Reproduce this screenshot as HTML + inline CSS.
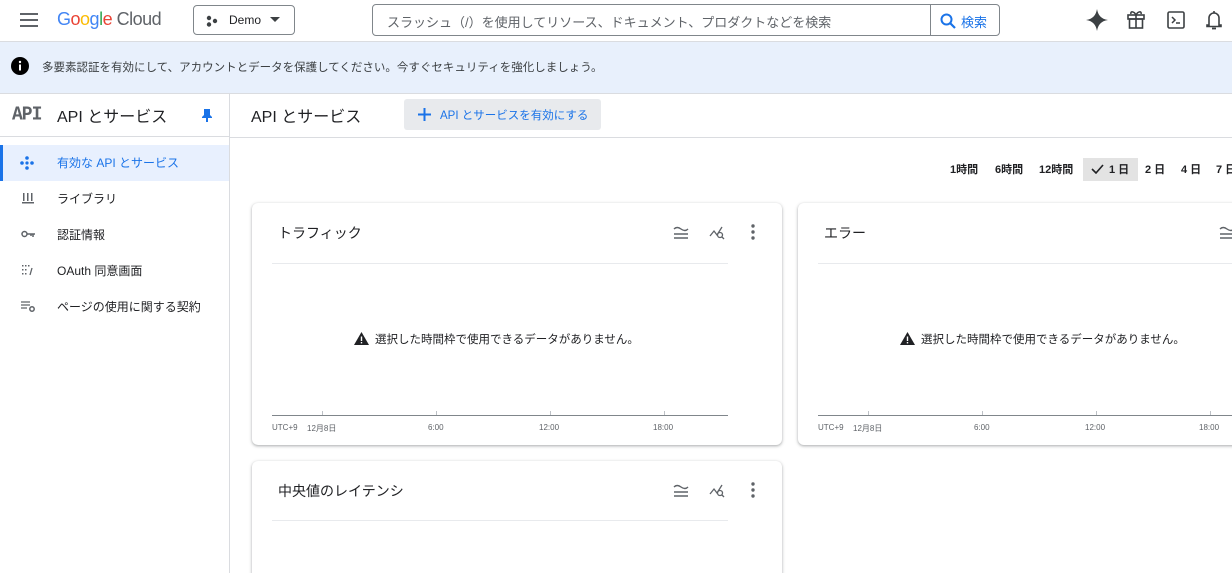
<!DOCTYPE html>
<html><head><meta charset="utf-8">
<style>
*{box-sizing:border-box;margin:0;padding:0}
html,body{width:1232px;height:573px;overflow:hidden}
body{background:#fff;font-family:"Liberation Sans","Noto Sans CJK JP",sans-serif;color:#202124;position:relative}
.a{position:absolute;white-space:nowrap}
.hdr{left:0;top:0;width:1232px;height:42px;border-bottom:1px solid #dadce0}
.banner{left:0;top:42px;width:1232px;height:52px;background:#e8f0fc;border-bottom:1px solid #dadce0;font-size:11.5px;color:#3c4043}
.side{left:0;top:94px;width:230px;height:479px;border-right:1px solid #dadce0}
.item{position:absolute;left:0;width:229px;height:36px;font-size:12px;line-height:36px;padding-left:57px;color:#202124;white-space:nowrap}
.card{position:absolute;background:#fff;border-radius:6px;box-shadow:0 1px 2px rgba(60,64,67,.3),0 1px 3px 1px rgba(60,64,67,.12)}
.ct{position:absolute;left:26px;top:20px;font-size:14px}
.div{position:absolute;left:20px;top:60px;width:456px;border-top:1px solid #e8eaed}
.msg{position:absolute;left:102px;top:128px;font-size:11.5px;white-space:nowrap}
.axis{position:absolute;left:20px;top:212px;width:456px;border-top:1px solid #80868b}
.lab{position:absolute;top:220px;font-size:8px;color:#5f6368;white-space:nowrap}
.tick{position:absolute;top:208px;width:1px;height:4px;background:#bdc1c6}
.tr span{position:absolute;font-size:11px;font-weight:bold;color:#202124;white-space:nowrap}
</style></head><body>
<div class="a hdr">
  <svg class="a" style="left:20px;top:13px" width="18" height="14"><rect y="0" width="18" height="2" fill="#5f6368"/><rect y="6" width="18" height="2" fill="#5f6368"/><rect y="12" width="18" height="2" fill="#5f6368"/></svg>
  <div class="a" style="left:57px;top:9px;font-size:18px;letter-spacing:-0.5px"><span style="color:#4285f4">G</span><span style="color:#ea4335">o</span><span style="color:#fbbc04">o</span><span style="color:#4285f4">g</span><span style="color:#34a853">l</span><span style="color:#ea4335">e</span> <span style="color:#5f6368">Cloud</span></div>
  <div class="a" style="left:193px;top:5px;width:102px;height:30px;border:1px solid #80868b;border-radius:4px">
    <svg class="a" style="left:12px;top:9px" width="12" height="12"><circle cx="3" cy="3" r="2.2" fill="#3c4043"/><circle cx="9" cy="6" r="2.2" fill="#3c4043"/><circle cx="3" cy="9.5" r="2.2" fill="#3c4043"/></svg>
    <span class="a" style="left:35px;top:7px;font-size:12px">Demo</span>
    <svg class="a" style="left:76px;top:11px" width="10" height="6"><path d="M0 0H10L5 5Z" fill="#3c4043"/></svg>
  </div>
  <div class="a" style="left:372px;top:4px;width:628px;height:32px;border:1px solid #80868b;border-radius:4px">
    <span class="a" style="left:14px;top:7px;font-size:13px;color:#5f6368">スラッシュ（/）を使用してリソース、ドキュメント、プロダクトなどを検索</span>
    <div class="a" style="left:557px;top:0;width:1px;height:30px;background:#80868b"></div>
    <svg class="a" style="left:567px;top:8px" width="16" height="16"><circle cx="6.5" cy="6.5" r="5" stroke="#1a73e8" stroke-width="2" fill="none"/><path d="M10 10L15 15" stroke="#1a73e8" stroke-width="2.2"/></svg>
    <span class="a" style="left:588px;top:7px;font-size:13px;color:#1a73e8">検索</span>
  </div>
  <svg class="a" style="left:1086px;top:9px" width="22" height="22"><path d="M11 0C12 6 15 10 22 11C15 12 12 16 11 22C10 16 7 12 0 11C7 10 10 6 11 0Z" fill="#3c4043"/></svg>
  <svg class="a" style="left:1127px;top:10px" width="18" height="19"><rect x="1" y="5" width="16" height="4" fill="none" stroke="#3c4043" stroke-width="1.6"/><rect x="2.5" y="9" width="13" height="9" fill="none" stroke="#3c4043" stroke-width="1.6"/><path d="M9 5V18M9 5C7 1 3 1 4 4M9 5C11 1 15 1 14 4" stroke="#3c4043" stroke-width="1.6" fill="none"/></svg>
  <svg class="a" style="left:1167px;top:11px" width="18" height="18"><rect x="1" y="1" width="16" height="16" rx="1.5" fill="none" stroke="#3c4043" stroke-width="1.6"/><path d="M5 6L8 9L5 12M9 12H13" stroke="#3c4043" stroke-width="1.5" fill="none"/></svg>
  <svg class="a" style="left:1206px;top:10px" width="16" height="20"><path d="M3 15V8A5 5 0 0 1 13 8V15H15V16.5H1V15Z" fill="none" stroke="#3c4043" stroke-width="1.6"/><path d="M6 18.5H10" stroke="#3c4043" stroke-width="1.8"/><path d="M8 1V3" stroke="#3c4043" stroke-width="1.6"/></svg>
</div>
<div class="a banner">
  <svg class="a" style="left:11px;top:15px" width="18" height="18"><circle cx="9" cy="9" r="9" fill="#000"/><rect x="8" y="7.5" width="2" height="6" fill="#fff"/><circle cx="9" cy="5" r="1.2" fill="#fff"/></svg>
  <span class="a" style="left:42px;top:17px">多要素認証を有効にして、アカウントとデータを保護してください。今すぐセキュリティを強化しましょう。</span>
</div>
<div class="a side">
  <div class="a" style="left:0;top:0;width:229px;height:43px;border-bottom:1px solid #dadce0">
    <span class="a" style="left:12px;top:11px;font-size:18px;font-weight:bold;color:#5f6368;font-family:'Liberation Mono',monospace;letter-spacing:-1px;transform:scaleY(1.1)">API</span>
    <span class="a" style="left:57px;top:9px;font-size:16px">API とサービス</span>
    <svg class="a" style="left:201px;top:14px" width="12" height="14"><path d="M3 1H9V7L11 9V10H7V14H5V10H1V9L3 7Z" fill="#1a73e8"/></svg>
  </div>
  <div class="item" style="top:51px;background:#e8f0fe;color:#1a73e8;border-left:3px solid #1a73e8;padding-left:54px">有効な API とサービス</div>
  <svg class="a" style="left:20px;top:62px" width="14" height="14"><g fill="#1a73e8"><circle cx="7" cy="2" r="1.8"/><circle cx="7" cy="12" r="1.8"/><circle cx="2" cy="7" r="1.8"/><circle cx="12" cy="7" r="1.8"/><circle cx="7" cy="7" r="1.6"/></g></svg>
  <div class="item" style="top:87px">ライブラリ</div>
  <svg class="a" style="left:22px;top:98px" width="12" height="13"><g fill="#5f6368"><rect x="1" y="1" width="1.5" height="8"/><rect x="5" y="1" width="1.5" height="8"/><rect x="9" y="1" width="1.5" height="8"/><rect x="0" y="10" width="12" height="1.5"/></g></svg>
  <div class="item" style="top:123px">認証情報</div>
  <svg class="a" style="left:21px;top:136px" width="15" height="8"><circle cx="3.5" cy="4" r="2.5" fill="none" stroke="#5f6368" stroke-width="1.5"/><path d="M6 4H14M12 4V7M10 4V6" stroke="#5f6368" stroke-width="1.5"/></svg>
  <div class="item" style="top:159px">OAuth 同意画面</div>
  <svg class="a" style="left:22px;top:170px" width="12" height="12"><g fill="#5f6368"><rect x="0" y="1" width="1.5" height="1.5"/><rect x="3" y="1" width="1.5" height="1.5"/><rect x="6" y="1" width="1.5" height="1.5"/><rect x="0" y="5" width="1.5" height="1.5"/><rect x="3" y="5" width="1.5" height="1.5"/><rect x="0" y="9" width="1.5" height="1.5"/><rect x="3" y="9" width="1.5" height="1.5"/></g><path d="M10 4L8 11" stroke="#5f6368" stroke-width="1.3"/></svg>
  <div class="item" style="top:195px">ページの使用に関する契約</div>
  <svg class="a" style="left:21px;top:206px" width="15" height="12"><path d="M0 2H9M0 5H9M0 8H6" stroke="#5f6368" stroke-width="1.3"/><circle cx="11" cy="9" r="2.2" fill="none" stroke="#5f6368" stroke-width="1.5"/></svg>
</div>
<div class="a" style="left:230px;top:94px;width:1002px;height:44px;border-bottom:1px solid #dadce0">
  <span class="a" style="left:21px;top:9px;font-size:16px">API とサービス</span>
  <div class="a" style="left:174px;top:5px;width:197px;height:31px;background:#e8eaed;border-radius:3px">
    <svg class="a" style="left:14px;top:9px" width="13" height="13"><path d="M6.5 0V13M0 6.5H13" stroke="#1a73e8" stroke-width="2"/></svg>
    <span class="a" style="left:36px;top:8px;font-size:11.5px;color:#1a73e8">API とサービスを有効にする</span>
  </div>
</div>
<div class="tr">
  <span style="left:950px;top:161px">1時間</span>
  <span style="left:995px;top:161px">6時間</span>
  <span style="left:1039px;top:161px">12時間</span>
  <div class="a" style="left:1083px;top:158px;width:55px;height:23px;background:#e3e3e3"></div>
  <svg class="a" style="left:1091px;top:164px" width="13" height="10"><path d="M1 5L5 9L12 1" stroke="#202124" stroke-width="1.6" fill="none"/></svg>
  <span style="left:1109px;top:161px">1 日</span>
  <span style="left:1145px;top:161px">2 日</span>
  <span style="left:1181px;top:161px">4 日</span>
  <span style="left:1216px;top:161px">7 日</span>
</div>

<div class="card" style="left:252px;top:203px;width:530px;height:242px">
  <div class="ct">トラフィック</div>
  <svg class="a" style="left:421px;top:22px" width="16" height="14"><path d="M1 4Q4 1 8 4T15 4M1 9H15M1 13H15" stroke="#5f6368" stroke-width="1.4" fill="none"/></svg>
  <svg class="a" style="left:457px;top:22px" width="17" height="16"><path d="M1 11L5 6L8 10L13 2" stroke="#5f6368" stroke-width="1.3" fill="none"/><circle cx="11" cy="10" r="2.5" stroke="#5f6368" stroke-width="1.3" fill="none"/><path d="M13 12L15 14" stroke="#5f6368" stroke-width="1.3"/></svg>
  <svg class="a" style="left:499px;top:21px" width="4" height="16"><circle cx="2" cy="2" r="1.7" fill="#5f6368"/><circle cx="2" cy="8" r="1.7" fill="#5f6368"/><circle cx="2" cy="14" r="1.7" fill="#5f6368"/></svg>
  <div class="div"></div>
  <div class="msg"><svg width="15" height="13" style="vertical-align:-2px;margin-right:6px"><path d="M7.5 0L15 13H0Z" fill="#202124"/><rect x="6.8" y="4.5" width="1.4" height="4.5" fill="#fff"/><rect x="6.8" y="10" width="1.4" height="1.4" fill="#fff"/></svg>選択した時間枠で使用できるデータがありません。</div>
  <div class="axis"></div>
  <div class="tick" style="left:70px"></div><div class="tick" style="left:184px"></div><div class="tick" style="left:298px"></div><div class="tick" style="left:412px"></div>
  <span class="lab" style="left:20px">UTC+9</span><span class="lab" style="left:55px">12月8日</span><span class="lab" style="left:176px">6:00</span><span class="lab" style="left:287px">12:00</span><span class="lab" style="left:401px">18:00</span>
</div>

<div class="card" style="left:798px;top:203px;width:530px;height:242px">
  <div class="ct">エラー</div>
  <svg class="a" style="left:421px;top:22px" width="16" height="14"><path d="M1 4Q4 1 8 4T15 4M1 9H15M1 13H15" stroke="#5f6368" stroke-width="1.4" fill="none"/></svg>
  <div class="div"></div>
  <div class="msg"><svg width="15" height="13" style="vertical-align:-2px;margin-right:6px"><path d="M7.5 0L15 13H0Z" fill="#202124"/><rect x="6.8" y="4.5" width="1.4" height="4.5" fill="#fff"/><rect x="6.8" y="10" width="1.4" height="1.4" fill="#fff"/></svg>選択した時間枠で使用できるデータがありません。</div>
  <div class="axis"></div>
  <div class="tick" style="left:70px"></div><div class="tick" style="left:184px"></div><div class="tick" style="left:298px"></div><div class="tick" style="left:412px"></div>
  <span class="lab" style="left:20px">UTC+9</span><span class="lab" style="left:55px">12月8日</span><span class="lab" style="left:176px">6:00</span><span class="lab" style="left:287px">12:00</span><span class="lab" style="left:401px">18:00</span>
</div>

<div class="card" style="left:252px;top:461px;width:530px;height:140px">
  <div class="ct">中央値のレイテンシ</div>
  <svg class="a" style="left:421px;top:22px" width="16" height="14"><path d="M1 4Q4 1 8 4T15 4M1 9H15M1 13H15" stroke="#5f6368" stroke-width="1.4" fill="none"/></svg>
  <svg class="a" style="left:457px;top:22px" width="17" height="16"><path d="M1 11L5 6L8 10L13 2" stroke="#5f6368" stroke-width="1.3" fill="none"/><circle cx="11" cy="10" r="2.5" stroke="#5f6368" stroke-width="1.3" fill="none"/><path d="M13 12L15 14" stroke="#5f6368" stroke-width="1.3"/></svg>
  <svg class="a" style="left:499px;top:21px" width="4" height="16"><circle cx="2" cy="2" r="1.7" fill="#5f6368"/><circle cx="2" cy="8" r="1.7" fill="#5f6368"/><circle cx="2" cy="14" r="1.7" fill="#5f6368"/></svg>
  <div class="div" style="top:59px"></div>
</div>
</body></html>
